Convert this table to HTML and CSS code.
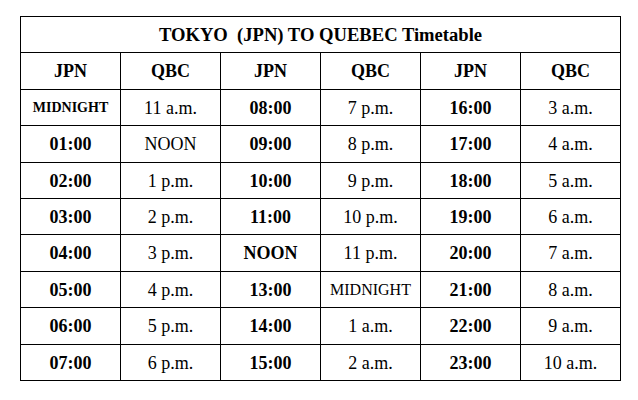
FILE: index.html
```html
<!DOCTYPE html>
<html>
<head>
<meta charset="utf-8">
<link rel="stylesheet" href="styles.css">
</head>
<body>
<table class="timetable">
  <colgroup>
    <col class="col"><col class="col"><col class="col"><col class="col"><col class="col"><col class="col">
  </colgroup>
  <tr class="r-title"><th colspan="6" class="title">TOKYO&nbsp; (JPN) TO QUEBEC Timetable</th></tr>
  <tr class="r-head"><th>JPN</th><th>QBC</th><th>JPN</th><th>QBC</th><th>JPN</th><th>QBC</th></tr>
  <tr class="r-a"><td class="jp small">MIDNIGHT</td><td>11 a.m.</td><td class="jp">08:00</td><td>7 p.m.</td><td class="jp">16:00</td><td>3 a.m.</td></tr>
  <tr class="r-b"><td class="jp">01:00</td><td class="word">NOON</td><td class="jp">09:00</td><td>8 p.m.</td><td class="jp">17:00</td><td>4 a.m.</td></tr>
  <tr class="r-a"><td class="jp">02:00</td><td>1 p.m.</td><td class="jp">10:00</td><td>9 p.m.</td><td class="jp">18:00</td><td>5 a.m.</td></tr>
  <tr class="r-a"><td class="jp">03:00</td><td>2 p.m.</td><td class="jp">11:00</td><td>10 p.m.</td><td class="jp">19:00</td><td>6 a.m.</td></tr>
  <tr class="r-b"><td class="jp">04:00</td><td>3 p.m.</td><td class="jp">NOON</td><td>11 p.m.</td><td class="jp">20:00</td><td>7 a.m.</td></tr>
  <tr class="r-a"><td class="jp">05:00</td><td>4 p.m.</td><td class="jp">13:00</td><td class="word-sm">MIDNIGHT</td><td class="jp">21:00</td><td>8 a.m.</td></tr>
  <tr class="r-b"><td class="jp">06:00</td><td>5 p.m.</td><td class="jp">14:00</td><td>1 a.m.</td><td class="jp">22:00</td><td>9 a.m.</td></tr>
  <tr class="r-a"><td class="jp">07:00</td><td>6 p.m.</td><td class="jp">15:00</td><td>2 a.m.</td><td class="jp">23:00</td><td>10 a.m.</td></tr>
</table>
</body>
</html>
```
FILE: styles.css
```css
html, body {
  margin: 0;
  padding: 0;
  background: #ffffff;
}
body {
  padding: 16px 0 0 20px;
  font-family: "Liberation Serif", "Times New Roman", serif;
  color: #000;
}
.timetable {
  border-collapse: collapse;
  table-layout: fixed;
  width: 601px;
}
.col {
  width: 100px;
}
.timetable th,
.timetable td {
  border: 1px solid #000;
  padding: 0;
  text-align: center;
  vertical-align: middle;
  font-size: 18px;
  line-height: 20px;
}
.timetable th {
  font-weight: bold;
}
.r-title { height: 36px; }
.r-head { height: 37px; }
.r-a { height: 36px; }
.r-b { height: 37px; }
.timetable .title {
  font-size: 18.6px;
}
.jp {
  font-weight: bold;
}
.timetable .small {
  font-size: 14px;
}
.timetable .word {
  font-size: 18px;
}
.timetable .word-sm {
  font-size: 16px;
}
```
